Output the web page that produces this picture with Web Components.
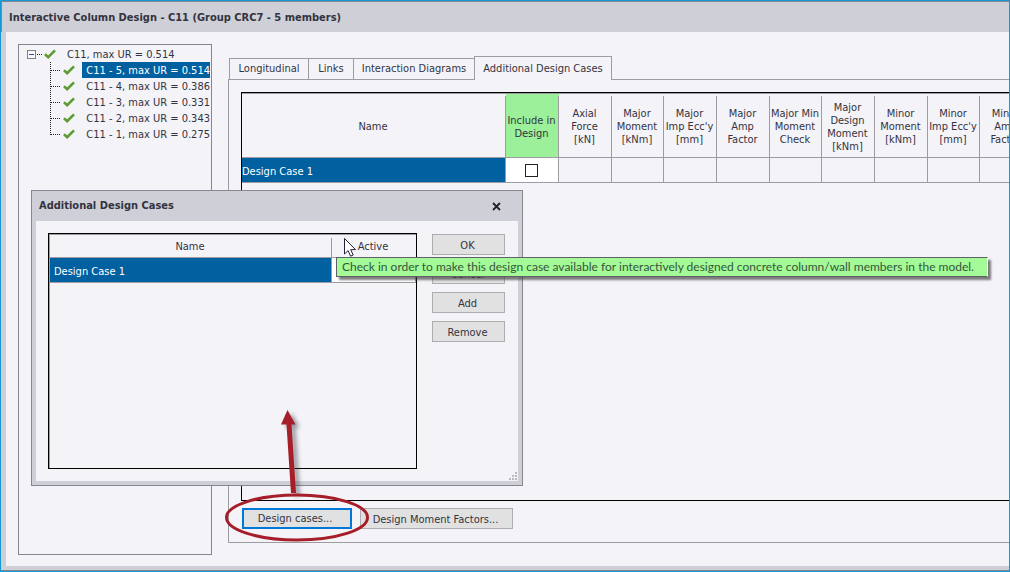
<!DOCTYPE html>
<html lang="en">
<head>
<meta charset="utf-8">
<title>Interactive Column Design</title>
<style>
html, body { margin: 0; height: 100%; }
body {
  --ink: #33333f; --surface: #f3f3f8; --band: #cfcfd7; --edge: #86868e; --line: #9c9ca2; --accent: #0060a0;
  font: 11px/16px "DejaVu Sans Condensed", "DejaVu Sans", sans-serif; color: var(--ink); overflow: hidden;
}
</style>
</head>
<body>
<design-window>
  <span slot="title">Interactive Column Design - C11 (Group CRC7 - 5 members)</span>
  <member-tree></member-tree>
  <tab-panel>
    <case-grid></case-grid>
    <button-bar></button-bar>
  </tab-panel>
  <case-dialog slot="overlay"></case-dialog>
</design-window>

<script>
function define(name, html, setup) {
  customElements.define(name, class extends HTMLElement {
    constructor() {
      super();
      const t = document.createElement('template');
      t.innerHTML = html;
      this.attachShadow({ mode: 'open' }).append(t.content.cloneNode(true));
      if (setup) setup(this);
    }
  });
}

const TICK = '<svg class="tick" width="12" height="10" viewBox="0 0 12 10" aria-hidden="true"><path d="M1 5.2 4.2 8.2 11 1.4" fill="none" stroke="#5f9a33" stroke-width="2.6"/></svg>';

define('design-window', `
<style>
:host { display: flex; flex-direction: column; box-sizing: border-box; height: 100vh; position: relative;
  border: 1px solid #1298d6; background: var(--band); overflow: hidden; }
header { height: 29px; line-height: 30px; padding: 2px 8px 0; box-shadow: inset 1px 1px var(--edge);
  font-weight: bold; flex: none; white-space: nowrap; }
h1 { margin: 0; font: inherit; }
main { flex: 1; min-height: 0; display: flex; gap: 16px; margin-left: 5px; padding: 12px 0 11px 12px; background: var(--surface); }
footer { height: 4px; border-bottom: 1px solid var(--edge); flex: none; }
</style>
<header><h1><slot name="title"></slot></h1></header>
<main><slot></slot></main>
<footer></footer>
<slot name="overlay"></slot>`);

define('member-tree', `
<style>
:host { display: block; box-sizing: border-box; width: 194px; flex: none; border: 1px solid var(--edge); padding: 1px 1px 0 8px; }
ul { list-style: none; margin: 0; padding: 0; }
.row { display: flex; align-items: center; height: 16px; white-space: nowrap; }
.row span { box-sizing: border-box; height: 16px; padding-top: 1px; }
.box { box-sizing: border-box; width: 9px; height: 9px; padding: 0; border: 1px solid #808088; background: linear-gradient(#3050a0, #3050a0) center/5px 1px no-repeat #f8f8fa; }
.dash { height: 1px; background: repeating-linear-gradient(90deg, #222 0 1px, transparent 1px 2px); }
.root .dash { width: 6px; margin: 0 1px 0 1px; }
.tick { flex: none; }
.root > .row > span { margin-left: 11px; }
.kids { margin-left: 23px; background: repeating-linear-gradient(#222 0 1px, transparent 1px 2px) 0 0/1px 73px no-repeat; }
.kids .dash { width: 11px; margin-right: 2px; }
.kids span { margin-left: 7px; padding-left: 4px; flex: 1; }
.kids .sel span { background: var(--accent); color: #fff; }
</style>
<ul role="tree" aria-label="Members">
  <li class="root" role="treeitem" aria-expanded="true">
    <div class="row"><button class="box" aria-label="Collapse"></button><i class="dash"></i>${TICK}<span>C11, max UR = 0.514</span></div>
    <ul class="kids" role="group"></ul>
  </li>
</ul>`, host => {
  const kids = host.shadowRoot.querySelector('.kids');
  [[5, '0.514'], [4, '0.386'], [3, '0.331'], [2, '0.343'], [1, '0.275']].forEach(([n, ur], i) => {
    kids.insertAdjacentHTML('beforeend', `<li role="treeitem" class="row${i ? '' : ' sel'}"><i class="dash"></i>${TICK}<span>C11 - ${n}, max UR = ${ur}</span></li>`);
  });
});

define('tab-panel', `
<style>
:host { display: flex; flex-direction: column; flex: 1; min-width: 0; padding: 12px 0; }
nav { display: flex; align-items: flex-end; height: 23px; padding-left: 1px; flex: none; position: relative; }
nav button { box-sizing: border-box; height: 21px; margin: 0; padding: 0; border: 1px solid var(--line); border-bottom: 0; border-left: 0;
  background: var(--surface); font: inherit; color: inherit; white-space: nowrap; }
nav button:first-child { border-left: 1px solid var(--line); }
nav .on { height: 24px; margin-bottom: -1px; border-left: 1px solid var(--line); }
nav .a { width: 80px; } nav .b { width: 45px; } nav .c { width: 120px; border-right: 0; } nav .on { width: 138px; }
section { flex: 1; min-height: 0; display: flex; flex-direction: column; border: 1px solid var(--line); border-right: 0; padding: 12px 0 13px 12px; }
</style>
<nav role="tablist"><button class="a" role="tab">Longitudinal</button><button class="b" role="tab">Links</button><button class="c" role="tab">Interaction Diagrams</button><button class="on" role="tab" aria-selected="true">Additional Design Cases</button></nav>
<section><slot></slot></section>`);

define('case-grid', `
<style>
:host { display: block; flex: 1; min-height: 0; border: 1px solid #000; border-right: 0; overflow: hidden; box-shadow: inset 0 1px var(--line); padding-top: 1px; }
table { table-layout: fixed; width: 791px; border-spacing: 0; }
th { box-sizing: border-box; height: 64px; padding: 2px 2px 0 0; font-weight: normal; line-height: 13px; border-bottom: 1px solid var(--line);
  background: linear-gradient(var(--line), var(--line)) right bottom/1px 61px no-repeat; white-space: nowrap; }
th.inc { background-color: #9df09a; }
td { box-sizing: border-box; height: 25px; padding: 0; border: solid var(--line); border-width: 0 1px 1px 0; }
td.name { background: var(--accent); color: #fff; padding-top: 4px; }
td.check { background: #fff; text-align: center; line-height: 0; padding-right: 2px; }
input { appearance: none; box-sizing: border-box; width: 13px; height: 13px; margin: 0; border: 1px solid #222; background: #fff; }
</style>
<table><colgroup></colgroup><thead><tr></tr></thead><tbody><tr></tr></tbody></table>`, host => {
  const r = host.shadowRoot;
  const cols = [['Name', 264], ['Include in<br>Design', 53], ['Axial<br>Force<br>[kN]', 53], ['Major<br>Moment<br>[kNm]', 52],
    ['Major<br>Imp Ecc\'y<br>[mm]', 53], ['Major<br>Amp<br>Factor', 53], ['Major Min<br>Moment<br>Check', 52],
    ['Major<br>Design<br>Moment<br>[kNm]', 53], ['Minor<br>Moment<br>[kNm]', 53], ['Minor<br>Imp Ecc\'y<br>[mm]', 52], ['Minor<br>Amp<br>Factor', 53]];
  cols.forEach(([label, w], i) => {
    r.querySelector('colgroup').insertAdjacentHTML('beforeend', `<col style="width:${w}px">`);
    r.querySelector('thead tr').insertAdjacentHTML('beforeend', `<th scope="col"${i === 1 ? ' class="inc"' : ''}>${label}</th>`);
    r.querySelector('tbody tr').insertAdjacentHTML('beforeend', i === 0 ? '<td class="name">Design Case 1</td>'
      : i === 1 ? '<td class="check"><input type="checkbox" aria-label="Include in Design"></td>' : '<td></td>');
  });
});

define('push-button', `
<style>
:host { display: block; }
button { box-sizing: border-box; width: 100%; height: 21px; margin: 0; padding: 2px 2px 0 0; border: 1px solid #adadb0; background: #e1e1e1;
  font: inherit; line-height: 16px; color: inherit; white-space: nowrap; }
:host([focused]) button { border: 2px solid #0078d7; padding: 1px 4px 0 0; }
</style>
<button type="button"><slot></slot></button>`);

define('button-bar', `
<style>
:host { display: flex; gap: 8px; margin: 7px 0 0 1px; flex: none; }
.first { width: 110px; position: relative; }
.second { width: 153px; }
call-out { position: absolute; left: -20px; bottom: -16px; z-index: 2; pointer-events: none; }
</style>
<div class="first"><push-button focused>Design cases...</push-button><call-out></call-out></div>
<push-button class="second">Design Moment Factors...</push-button>`);

define('call-out', `
<style>:host { display: block; } svg { display: block; filter: drop-shadow(4px 3px 2px rgba(60,60,70,.5)); } svg + svg { filter: none; position: absolute; inset: 0; }</style>
<svg width="150" height="141" viewBox="0 0 150 141" aria-hidden="true">
  <path d="M65.500 6 73.500 20.500H69.500L74 89H69L64.500 20.500H59Z" fill="#a51e29"/>
</svg>
<svg width="150" height="141" viewBox="0 0 150 141" aria-hidden="true">
  <ellipse cx="75" cy="113.500" rx="70.500" ry="22.500" fill="none" stroke="#a51e29" stroke-width="3"/>
</svg>`);

define('case-dialog', `
<style>
:host { display: block; box-sizing: border-box; position: absolute; left: 30px; top: 189px; width: 492px; z-index: 1;
  border: 1px solid var(--edge); background: var(--band); padding: 0 4px 4px; }
header { display: flex; align-items: center; height: 30px; padding: 0 16px 0 3px; }
h2 { flex: 1; margin: 0; font-size: 11px; font-weight: bold; }
header button { width: 12px; height: 16px; border: 0; padding: 0; background: none; }
header svg { display: block; margin: auto; }
.body { display: flex; gap: 15px; align-items: flex-start; background: var(--surface); padding: 12px 13px 12px 12px; position: relative; }
.list { box-sizing: border-box; flex: 1; height: 236px; border: 1px solid #000; box-shadow: inset 1px 1px var(--line); padding: 1px 0 0 1px; }
table { table-layout: fixed; width: 100%; border-spacing: 0; }
th { box-sizing: border-box; height: 23px; padding: 2px 2px 0 0; font-weight: normal; border-bottom: 1px solid var(--line); }
th:first-child { width: 282px; background: linear-gradient(var(--line), var(--line)) right bottom/1px 19px no-repeat; }
td { box-sizing: border-box; height: 25px; padding: 4px 0 0 4px; border: solid var(--line); border-width: 0 1px 1px 0; background: #fff; }
td.name { background: var(--accent); color: #fff; }
.buttons { width: 73px; display: flex; flex-direction: column; gap: 8px; padding-top: 1px; }
.grip { position: absolute; right: 0; bottom: 0; }
.pointer { position: absolute; left: 307px; top: 16px; z-index: 2; }
tool-tip { position: absolute; left: 300px; top: 36px; z-index: 1; }
</style>
<header><h2>Additional Design Cases</h2><button aria-label="Close"><svg width="9" height="9" viewBox="0 0 9 9"><path d="M1 1 8 8M8 1 1 8" stroke="#222" stroke-width="1.800"/></svg></button></header>
<div class="body">
  <div class="list"><table><thead><tr><th scope="col">Name</th><th scope="col">Active</th></tr></thead>
  <tbody><tr><td class="name">Design Case 1</td><td></td></tr></tbody></table></div>
  <div class="buttons"><push-button>OK</push-button><push-button>Cancel</push-button><push-button>Add</push-button><push-button>Remove</push-button></div>
  <svg class="grip" width="9" height="9" viewBox="0 0 9 9" aria-hidden="true"><path d="M6 0h2v2h-2zM3 3h2v2h-2zM6 3h2v2h-2zM0 6h2v2h-2zM3 6h2v2h-2zM6 6h2v2h-2z" fill="#b8b8be"/></svg>
  <svg class="pointer" width="14" height="21" viewBox="0 0 14 21" aria-hidden="true"><path d="M1.500 1.500V17l3.600-3.400 2.500 5.600 2.600-1.200-2.500-5.400h4.800Z" fill="#fff" stroke="#222238"/></svg>
  <tool-tip>Check in order to make this design case available for interactively designed concrete column/wall members in the model.</tool-tip>
</div>`);

define('tool-tip', `
<style>
:host { display: block; box-sizing: border-box; height: 20px; min-width: 652px; padding: 0 5px; border: 1px solid #606068; border-right-color: #fff; background: #a3fa97;
  color: #35563c; font-family: Lato, "Noto Sans", sans-serif; font-size: 12px; line-height: 18px; white-space: nowrap; box-shadow: 3px 3px 2px rgba(60,60,60,.65); }
</style>
<slot></slot>`);
</script>
</body>
</html>
